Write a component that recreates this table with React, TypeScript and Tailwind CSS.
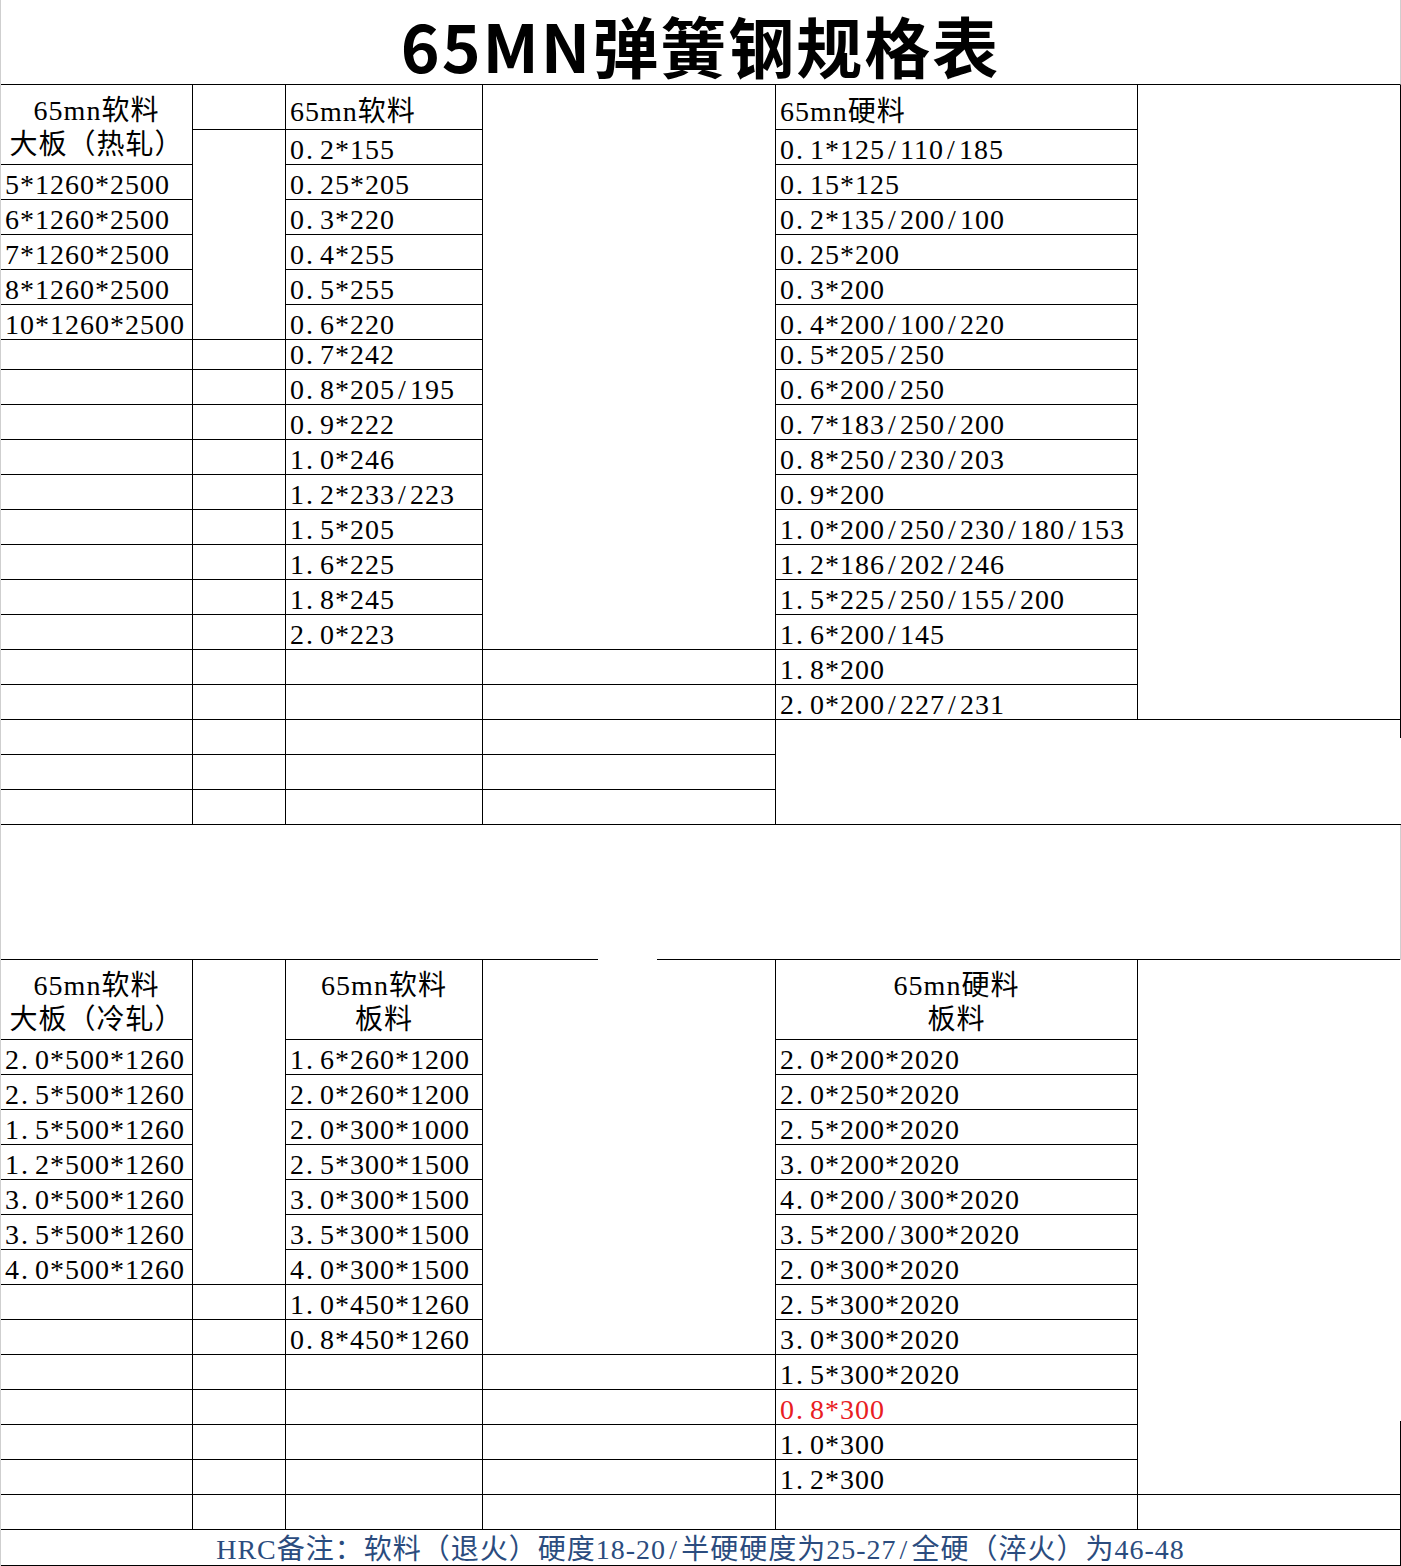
import React from "react";

const HC: Record<number, string> = {
  30: "h-[30px]",
  35: "h-[35px]",
  45: "h-[45px]",
  80: "h-[80px]",
  105: "h-[105px]",
  210: "h-[210px]",
  325: "h-[325px]",
  395: "h-[395px]",
  535: "h-[535px]",
  565: "h-[565px]",
  635: "h-[635px]",
};

function Txt({ s }: { s: string }) {
  const parts = s.split(/([./])/).filter((p) => p !== "");
  return (
    <>
      {parts.map((p, i) =>
        p === "." ? (
          <span key={i} className="inline-block w-[15px] pl-[1px]">
            .
          </span>
        ) : p === "/" ? (
          <span key={i} className="inline-block w-[15px] text-center">
            /
          </span>
        ) : (
          <span key={i}>{p}</span>
        )
      )}
    </>
  );
}

function Cell({
  h,
  children,
  className = "",
}: {
  h: number;
  children?: React.ReactNode;
  className?: string;
}) {
  return <div className={`${HC[h]} border-r border-b border-black ${className}`}>{children}</div>;
}

function Data({ h, s, red }: { h: number; s?: string; red?: boolean }) {
  return (
    <Cell h={h} className={`flex items-end whitespace-nowrap pl-[4px] ${red ? "text-[#e8201f]" : ""}`}>
      {s ? <Txt s={s} /> : null}
    </Cell>
  );
}

function Head2({ h, a, b }: { h: number; a: string; b: string }) {
  return (
    <Cell h={h} className="flex flex-col items-center justify-end whitespace-nowrap pb-[2px] leading-[34px]">
      <div>{a}</div>
      <div>{b}</div>
    </Cell>
  );
}

function Head1({ s }: { s: string }) {
  return (
    <Cell h={45} className="flex items-end whitespace-nowrap pl-[4px] pb-[3px]">
      {s}
    </Cell>
  );
}

const topRows = [35, 35, 35, 35, 35, 35, 30, 35, 35, 35, 35, 35, 35, 35, 35, 35, 35, 35, 35, 35];
const botRows = [35, 35, 35, 35, 35, 35, 35, 35, 35, 35, 35, 35, 35, 35];

const topA = ["5*1260*2500", "6*1260*2500", "7*1260*2500", "8*1260*2500", "10*1260*2500"];
const topC = [
  "0.2*155",
  "0.25*205",
  "0.3*220",
  "0.4*255",
  "0.5*255",
  "0.6*220",
  "0.7*242",
  "0.8*205/195",
  "0.9*222",
  "1.0*246",
  "1.2*233/223",
  "1.5*205",
  "1.6*225",
  "1.8*245",
  "2.0*223",
];
const topE = [
  "0.1*125/110/185",
  "0.15*125",
  "0.2*135/200/100",
  "0.25*200",
  "0.3*200",
  "0.4*200/100/220",
  "0.5*205/250",
  "0.6*200/250",
  "0.7*183/250/200",
  "0.8*250/230/203",
  "0.9*200",
  "1.0*200/250/230/180/153",
  "1.2*186/202/246",
  "1.5*225/250/155/200",
  "1.6*200/145",
  "1.8*200",
  "2.0*200/227/231",
];
const botA = [
  "2.0*500*1260",
  "2.5*500*1260",
  "1.5*500*1260",
  "1.2*500*1260",
  "3.0*500*1260",
  "3.5*500*1260",
  "4.0*500*1260",
];
const botC = [
  "1.6*260*1200",
  "2.0*260*1200",
  "2.0*300*1000",
  "2.5*300*1500",
  "3.0*300*1500",
  "3.5*300*1500",
  "4.0*300*1500",
  "1.0*450*1260",
  "0.8*450*1260",
];
const botE = [
  "2.0*200*2020",
  "2.0*250*2020",
  "2.5*200*2020",
  "3.0*200*2020",
  "4.0*200/300*2020",
  "3.5*200/300*2020",
  "2.0*300*2020",
  "2.5*300*2020",
  "3.0*300*2020",
  "1.5*300*2020",
  "0.8*300",
  "1.0*300",
  "1.2*300",
];

export default function App() {
  return (
    <div className="w-[1401px] border-l border-[#cfcfcf] bg-white font-[family-name:Liberation_Serif,Noto_Sans_CJK_SC,serif] text-[28px] leading-[28px] tracking-[1px] text-black">
      {/* Title */}
      <div className="flex h-[85px] items-end justify-center border-r border-b border-r-[#cfcfcf] border-b-black">
        <div className="whitespace-nowrap font-[family-name:Noto_Sans_CJK_SC,sans-serif] text-[66px] font-bold leading-[80px] tracking-[2px]">
          65MN弹簧钢规格表
        </div>
      </div>

      {/* Top section */}
      <div className="flex">
        <div className="flex w-[192px] flex-col">
          <Head2 h={80} a="65mn软料" b="大板（热轧）" />
          {topRows.slice(1).map((h, i) => (
            <Data key={i} h={h} s={topA[i]} />
          ))}
        </div>
        <div className="flex w-[93px] flex-col">
          <Cell h={45} />
          <Cell h={210} />
          {topRows.slice(6).map((h, i) => (
            <Cell key={i} h={h} />
          ))}
        </div>
        <div className="flex w-[197px] flex-col">
          <Head1 s="65mn软料" />
          {topRows.map((h, i) => (
            <Data key={i} h={h} s={topC[i]} />
          ))}
        </div>
        <div className="flex w-[293px] flex-col">
          <Cell h={565} />
          {[35, 35, 35, 35, 35].map((h, i) => (
            <Cell key={i} h={h} />
          ))}
        </div>
        <div className="flex w-[625px] flex-col">
          <div className="flex">
            <div className="flex w-[362px] flex-col">
              <Head1 s="65mn硬料" />
              {topRows.slice(0, 17).map((h, i) => (
                <Data key={i} h={h} s={topE[i]} />
              ))}
            </div>
            <div className="flex w-[263px] flex-col">
              <Cell h={635} />
            </div>
          </div>
          <div className="flex h-[105px] flex-col border-b border-black">
            <div className="h-[18px] border-r border-black" />
          </div>
        </div>
      </div>

      {/* Gap */}
      <div className="flex h-[135px] flex-col justify-end border-r border-[#cfcfcf]">
        <div className="flex h-px">
          <div className="w-[597px] bg-black" />
          <div className="w-[59px]" />
          <div className="flex-1 bg-black" />
        </div>
      </div>

      {/* Bottom section */}
      <div className="flex">
        <div className="flex w-[192px] flex-col">
          <Head2 h={80} a="65mn软料" b="大板（冷轧）" />
          {botRows.map((h, i) => (
            <Data key={i} h={h} s={botA[i]} />
          ))}
        </div>
        <div className="flex w-[93px] flex-col">
          <Cell h={325} />
          {botRows.slice(0, 7).map((h, i) => (
            <Cell key={i} h={h} />
          ))}
        </div>
        <div className="flex w-[197px] flex-col">
          <Head2 h={80} a="65mn软料" b="板料" />
          {botRows.map((h, i) => (
            <Data key={i} h={h} s={botC[i]} />
          ))}
        </div>
        <div className="flex w-[293px] flex-col">
          <Cell h={395} />
          {botRows.slice(0, 5).map((h, i) => (
            <Cell key={i} h={h} />
          ))}
        </div>
        <div className="flex w-[362px] flex-col">
          <Head2 h={80} a="65mn硬料" b="板料" />
          {botRows.map((h, i) => (
            <Data key={i} h={h} s={botE[i]} red={i === 10} />
          ))}
        </div>
        <div className="flex w-[263px] flex-col">
          <div className="flex h-[535px] flex-col justify-end border-b border-black">
            <div className="h-[73px] border-r border-black" />
          </div>
          <Cell h={35} />
        </div>
      </div>

      {/* Footer */}
      <div className="flex h-[36px] items-end justify-center whitespace-nowrap border-r border-b border-black pb-[1px] text-[#2b4c7e]">
        <Txt s="HRC备注：软料（退火）硬度18-20/半硬硬度为25-27/全硬（淬火）为46-48" />
      </div>
    </div>
  );
}
